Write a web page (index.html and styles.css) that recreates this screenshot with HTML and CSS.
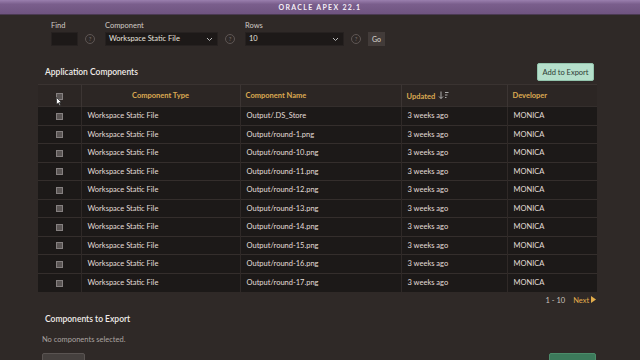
FILE: index.html
```html
<!DOCTYPE html>
<html lang="en">

<head>
    <meta charset="UTF-8">
    <meta name="viewport" content="width=device-width, initial-scale=1.0">
    <title>Export Components</title>
    <link rel="stylesheet" href="styles.css">
</head>

<body>
    <div class="topbar">ORACLE APEX 22.1</div>

    <div class="toolbar">
        <div class="field">
            <label>Find</label>
            <div class="field-row">
                <div class="input find-input"></div>
                <span class="help">?</span>
            </div>
        </div>
        <div class="field">
            <label>Component</label>
            <div class="field-row">
                <div class="input select comp-select">Workspace Static File
                    <svg class="chev" width="7" height="5" viewBox="0 0 7 5"><path d="M1 1l2.5 2.5L6 1" fill="none" stroke="#bbb" stroke-width="1"/></svg>
                </div>
                <span class="help">?</span>
            </div>
        </div>
        <div class="field">
            <label>Rows</label>
            <div class="field-row">
                <div class="input select rows-select">10
                    <svg class="chev" width="7" height="5" viewBox="0 0 7 5"><path d="M1 1l2.5 2.5L6 1" fill="none" stroke="#bbb" stroke-width="1"/></svg>
                </div>
                <span class="help">?</span>
                <button class="go-btn">Go</button>
            </div>
        </div>
    </div>

    <div class="region">
        <div class="region-head">
            <h2>Application Components</h2>
            <button class="add-btn">Add to Export</button>
        </div>

        <table class="report">
            <thead>
                <tr>
                    <th class="col-check">
                        <span class="box"></span>
                        <svg class="cursor" width="6" height="9" viewBox="0 0 6 9"><path d="M0.5 0.5v7l1.8-1.6 1.3 2.6 1-0.5-1.3-2.5h2.2z" fill="#fff" stroke="#111" stroke-width="0.6"/></svg>
                    </th>
                    <th class="col-type">Component Type</th>
                    <th class="col-name">Component Name</th>
                    <th class="col-upd">Updated
                        <svg class="sort" width="11" height="9" viewBox="0 0 11 9"><path d="M3 0.5v7M1 5.5l2 2 2-2" fill="none" stroke="#bbb" stroke-width="0.9"/><path d="M7 1.5h3.5M7 4h2.5M7 6.5h1.5" stroke="#bbb" stroke-width="0.9"/></svg>
                    </th>
                    <th class="col-dev">Developer</th>
                </tr>
            </thead>
            <tbody id="rows"></tbody>
        </table>

        <div class="pager">
            <span class="range">1 - 10</span>
            <span class="next">Next <svg width="5" height="7" viewBox="0 0 5 7"><path d="M0 0l5 3.5L0 7z" fill="#e2ad4c"/></svg></span>
        </div>
    </div>

    <div class="region export">
        <h2>Components to Export</h2>
        <p class="empty">No components selected.</p>
        <div class="bottom-btns">
            <button class="gray-btn"></button>
            <button class="green-btn"></button>
        </div>
    </div>

    <script>
        const names = ['Output/.DS_Store', 'Output/round-1.png', 'Output/round-10.png', 'Output/round-11.png',
            'Output/round-12.png', 'Output/round-13.png', 'Output/round-14.png', 'Output/round-15.png',
            'Output/round-16.png', 'Output/round-17.png'];
        const body = document.getElementById('rows');
        names.forEach(function (n) {
            const tr = document.createElement('tr');
            tr.innerHTML = '<td class="col-check"><span class="box"></span></td>' +
                '<td>Workspace Static File</td><td>' + n + '</td><td>3 weeks ago</td><td>MONICA</td>';
            body.appendChild(tr);
        });
    </script>
</body>

</html>
```

FILE: styles.css
```css
* {
    margin: 0;
    padding: 0;
    box-sizing: border-box;
}

body {
    font-family: Lato, "Open Sans", sans-serif;
    background-color: #2f2927;
    color: #e6e1de;
    width: 640px;
    height: 360px;
    overflow: hidden;
}

.topbar {
    height: 15px;
    background: linear-gradient(#9a7fae, #7a5e8c 30%, #6f5480);
    color: #f4eef6;
    font-size: 7px;
    font-weight: 700;
    letter-spacing: 1.3px;
    text-align: center;
    line-height: 15px;
    border-bottom: 1px solid #4a3a52;
}

.toolbar {
    display: flex;
    padding: 6px 0 0 51px;
    gap: 10px;
}

.field label {
    display: block;
    font-size: 7.5px;
    color: #cfc9c5;
    height: 11px;
}

.field-row {
    display: flex;
    align-items: center;
    gap: 6px;
}

.input {
    height: 14px;
    background-color: #1d1918;
    border: 1px solid #262120;
    font-size: 7.5px;
    color: #e6e1de;
    line-height: 12px;
    padding-left: 3px;
}

.find-input {
    width: 27px;
}

.select {
    display: flex;
    align-items: center;
    justify-content: space-between;
    padding-right: 4px;
}

.comp-select {
    width: 113px;
}

.rows-select {
    width: 99px;
}

.help {
    width: 10px;
    height: 10px;
    border: 1px solid #5e5654;
    border-radius: 50%;
    font-size: 6px;
    color: #7a716e;
    text-align: center;
    line-height: 8px;
    margin-left: 1px;
}

.go-btn {
    margin-left: 1px;
    width: 17px;
    height: 14px;
    background-color: #423b39;
    border: none;
    color: #dcd6d2;
    font-family: inherit;
    font-size: 7px;
}

.region {
    padding: 0 43px 0 38px;
}

.region-head {
    display: flex;
    justify-content: space-between;
    align-items: center;
    padding: 17px 3px 3px 7px;
}

.region h2 {
    font-size: 8.5px;
    font-weight: 600;
    color: #f1ece9;
}

.add-btn {
    background-color: #b5dfcb;
    color: #2c3a33;
    border: 1px solid #93c4ad;
    border-radius: 2px;
    font-family: inherit;
    font-size: 7.5px;
    width: 57px;
    height: 18px;
}

.report {
    width: 100%;
    border-collapse: collapse;
    font-size: 7.5px;
}

.report th {
    height: 22px;
    background-color: #2c2624;
    color: #dcaa52;
    font-weight: 700;
    text-align: left;
    padding-left: 5px;
    border-left: 1px solid #3c3533;
    border-top: 1px solid #3a3331;
}

.report th.col-type {
    text-align: center;
    padding-left: 0;
}

.report td {
    height: 18.5px;
    background-color: #1c1918;
    color: #e3ded9;
    padding-left: 6px;
    border-top: 1px solid #342e2c;
    border-left: 1px solid #2f2927;
}

.report .col-check {
    width: 43px;
    text-align: center;
    padding-left: 0;
    position: relative;
    border-left: none;
}

.col-type {
    width: 159px;
}

.col-name {
    width: 161px;
}

.col-upd {
    width: 106px;
}

.box {
    display: inline-block;
    width: 7px;
    height: 7px;
    border: 1px solid #858080;
    background-color: #5a5554;
    vertical-align: middle;
}

.sort {
    vertical-align: -1px;
    margin-left: 1px;
}

.cursor {
    position: absolute;
    left: 18px;
    top: 12px;
}

.pager {
    display: flex;
    justify-content: flex-end;
    gap: 8px;
    font-size: 7.5px;
    padding: 4px 1px 0 0;
}

.range {
    color: #c9c3bf;
}

.next {
    color: #e2ad4c;
}

.export {
    padding-top: 9px;
}

.export h2 {
    padding-left: 7px;
}

.empty {
    font-size: 7.5px;
    color: #aaa3a0;
    padding: 11px 0 0 4px;
}

.bottom-btns {
    display: flex;
    justify-content: space-between;
    padding: 9px 1px 0 4px;
}

.gray-btn {
    width: 43px;
    height: 12px;
    background-color: #45403e;
    border: 1px solid #5a5452;
    border-radius: 2px;
}

.green-btn {
    width: 47px;
    height: 12px;
    background-color: #3c7a5b;
    border: 1px solid #4b8c6a;
    border-radius: 2px;
}
```
